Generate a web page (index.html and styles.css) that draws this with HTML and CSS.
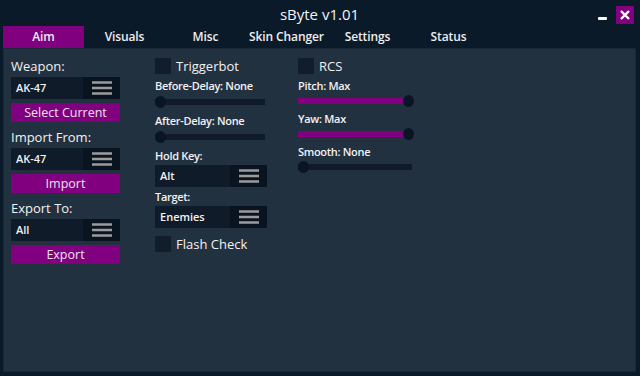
FILE: index.html
```html
<!DOCTYPE html>
<html lang="en">
<head>
    <meta charset="UTF-8" />
    <title>sByte v1.01</title>
    <link rel="stylesheet" href="styles.css">
</head>
<body>

<div class="window">

    <!-- Title bar -->
    <div class="titlebar">
        <span></span>
        <span class="title">sByte v1.01</span>
        <div class="window-buttons">
            <span class="btn-min"></span>
            <span class="btn-close">
                <svg width="10" height="10" viewBox="0 0 10 10"><path d="M1 1L9 9M9 1L1 9" stroke="#fff" stroke-width="2.4"/></svg>
            </span>
        </div>
    </div>

    <!-- Tabs -->
    <div class="tabs">
        <span class="tab active">Aim</span>
        <span class="tab">Visuals</span>
        <span class="tab">Misc</span>
        <span class="tab">Skin Changer</span>
        <span class="tab">Settings</span>
        <span class="tab">Status</span>
    </div>

    <!-- Aim panel -->
    <div class="panel">

        <div class="col col-left">
            <div class="group">
                <div class="label">Weapon:</div>
                <div class="dropdown">
                    <span class="dropdown-value">AK-47</span>
                    <span class="dropdown-btn"><svg width="20" height="14" viewBox="0 0 20 14"><path d="M0 1.5H20M0 7H20M0 12.5H20" stroke="#9c9c9c" stroke-width="2.4"/></svg></span>
                </div>
                <div class="button">Select Current</div>
            </div>
            <div class="group">
                <div class="label">Import From:</div>
                <div class="dropdown">
                    <span class="dropdown-value">AK-47</span>
                    <span class="dropdown-btn"><svg width="20" height="14" viewBox="0 0 20 14"><path d="M0 1.5H20M0 7H20M0 12.5H20" stroke="#9c9c9c" stroke-width="2.4"/></svg></span>
                </div>
                <div class="button">Import</div>
            </div>
            <div class="group">
                <div class="label">Export To:</div>
                <div class="dropdown">
                    <span class="dropdown-value">All</span>
                    <span class="dropdown-btn"><svg width="20" height="14" viewBox="0 0 20 14"><path d="M0 1.5H20M0 7H20M0 12.5H20" stroke="#9c9c9c" stroke-width="2.4"/></svg></span>
                </div>
                <div class="button">Export</div>
            </div>
        </div>

        <div class="col col-mid">
            <div class="check"><span class="check-box"></span>Triggerbot</div>
            <div class="small-label">Before-Delay: None</div>
            <div class="slider slider-mid"><span class="slider-thumb" style="left:0"></span></div>
            <div class="small-label">After-Delay: None</div>
            <div class="slider slider-mid"><span class="slider-thumb" style="left:0"></span></div>
            <div class="small-label">Hold Key:</div>
            <div class="dropdown">
                <span class="dropdown-value">Alt</span>
                <span class="dropdown-btn"><svg width="20" height="14" viewBox="0 0 20 14"><path d="M0 1.5H20M0 7H20M0 12.5H20" stroke="#9c9c9c" stroke-width="2.4"/></svg></span>
            </div>
            <div class="small-label">Target:</div>
            <div class="dropdown">
                <span class="dropdown-value">Enemies</span>
                <span class="dropdown-btn"><svg width="20" height="14" viewBox="0 0 20 14"><path d="M0 1.5H20M0 7H20M0 12.5H20" stroke="#9c9c9c" stroke-width="2.4"/></svg></span>
            </div>
            <div class="check check-flash"><span class="check-box"></span>Flash Check</div>
        </div>

        <div class="col col-right">
            <div class="check"><span class="check-box"></span>RCS</div>
            <div class="small-label">Pitch: Max</div>
            <div class="slider slider-right"><span class="slider-fill" style="width:94%"></span><span class="slider-thumb" style="left:calc(100% - 9px)"></span></div>
            <div class="small-label">Yaw: Max</div>
            <div class="slider slider-right"><span class="slider-fill" style="width:94%"></span><span class="slider-thumb" style="left:calc(100% - 9px)"></span></div>
            <div class="small-label">Smooth: None</div>
            <div class="slider slider-right"><span class="slider-thumb" style="left:0"></span></div>
        </div>

    </div>

</div>

</body>
</html>
```

FILE: styles.css
```css
/* Page */
* {
    box-sizing: border-box;
    margin: 0;
    padding: 0;
}

body {
    font-family: 'Open Sans', 'Noto Sans', sans-serif;
    background: #0b1a29;
    color: #f2f2f2;
    width: 640px;
    height: 376px;
    overflow: hidden;
}

.window {
    padding: 0 4px 0 3px;
}

/* Title bar */
.titlebar {
    height: 26px;
    display: grid;
    grid-template-columns: 1fr auto 1fr;
    align-items: center;
}
.title {
    font-size: 15px;
    color: #f4f4f4;
    padding-top: 1px;
}
.window-buttons {
    display: flex;
    justify-content: flex-end;
    align-items: center;
    gap: 9px;
    padding-top: 4px;
    padding-right: 2px;
}
.btn-min {
    width: 9px;
    height: 3px;
    background: #fff;
    border-radius: 1px;
    margin-top: 7px;
}
.btn-close {
    width: 18px;
    height: 18px;
    background: #800080;
    display: flex;
    align-items: center;
    justify-content: center;
}

/* Tabs */
.tabs {
    display: flex;
    height: 22px;
}
.tab {
    width: 81px;
    text-align: center;
    font-size: 12px;
    line-height: 22px;
    font-weight: 600;
    color: #eeeeee;
    white-space: nowrap;
    letter-spacing: -0.1px;
}
.tab.active {
    background: #800080;
}

/* Panel */
.panel {
    height: 324px;
    background: #223140;
    border: 1px solid #1a2736;
    display: flex;
    padding: 7px 0 0 7px;
}
.col-left {
    width: 109px;
    margin-right: 35px;
}
.col-mid {
    width: 112px;
    margin-right: 31px;
    padding-top: 2px;
}
.col-right {
    width: 116px;
    padding-top: 2px;
}

/* Left column groups */
.group {
    margin-bottom: 5px;
}
.label {
    font-size: 13px;
    line-height: 20px;
    margin-bottom: 1px;
}
.button {
    margin-top: 4px;
    height: 19px;
    background: #800080;
    text-align: center;
    font-size: 12.5px;
    line-height: 19px;
    color: #ece0ec;
}

/* Dropdown */
.dropdown {
    display: flex;
    height: 22px;
    background: #0f1b29;
}
.col-mid .dropdown {
    margin-bottom: 2px;
}
.dropdown-value {
    flex: 1;
    font-size: 11px;
    font-weight: 600;
    line-height: 22px;
    padding-left: 5px;
}
.dropdown-btn {
    width: 37px;
    background: #0a1420;
    display: flex;
    align-items: center;
    justify-content: center;
}

/* Checkbox */
.check {
    display: flex;
    align-items: center;
    gap: 5px;
    height: 16px;
    font-size: 13px;
    margin-bottom: 4px;
}
.check-box {
    width: 16px;
    height: 16px;
    background: #111d2b;
}
.check-flash {
    margin-top: 8px;
}

.small-label {
    font-size: 11px;
    font-weight: 600;
    line-height: 16px;
    letter-spacing: -0.3px;
}
.col-mid .small-label {
    margin-bottom: 1px;
}

/* Slider */
.slider {
    position: relative;
    height: 14px;
    display: flex;
    align-items: center;
}
.slider::before {
    content: "";
    position: absolute;
    left: 0;
    right: 0;
    top: 4px;
    height: 6px;
    background: #0f1b29;
}
.slider-mid {
    width: 110px;
    margin-bottom: 4px;
}
.slider-right {
    width: 114px;
    margin-bottom: 3px;
}
.slider-fill {
    position: relative;
    height: 6px;
    background: #800080;
}
.slider-thumb {
    position: absolute;
    top: 1px;
    width: 11px;
    height: 12px;
    border-radius: 50%;
    background: #0a1523;
}
```
